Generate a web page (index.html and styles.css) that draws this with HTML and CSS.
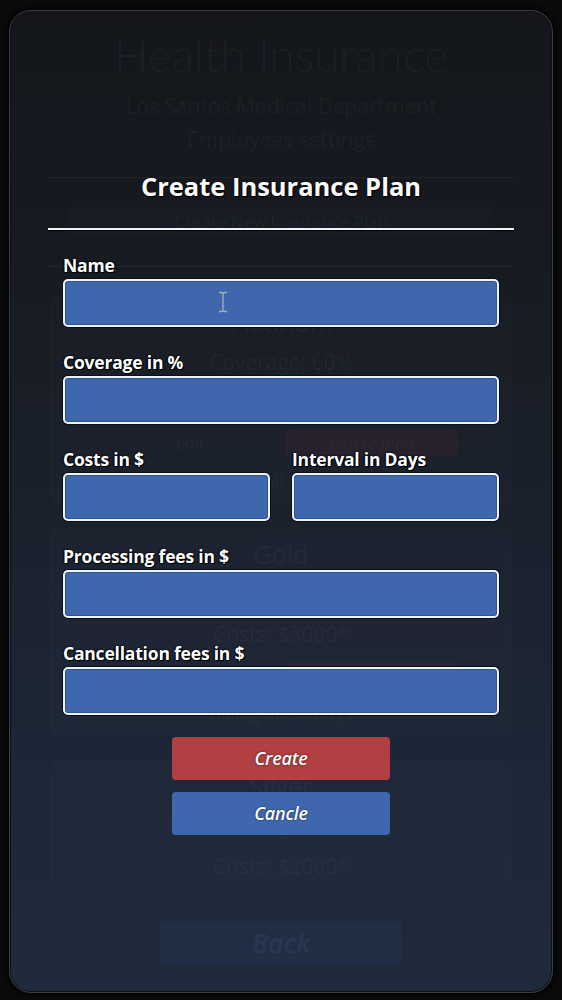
FILE: index.html
```html
<!DOCTYPE html>
<html lang="en">
<head>
<meta charset="utf-8">
<title>Health Insurance</title>
<link rel="stylesheet" href="styles.css">
</head>
<body>
<div class="frame">
  <div class="page">
    <h1 class="page-title">Health Insurance</h1>
    <p class="page-sub">Los Santos Medical Department</p>
    <p class="page-sub">Employees settings</p>
    <div class="page-divider"></div>
    <div class="page-new">Create New Insurance Plan</div>
    <div class="page-divider thin"></div>
    <div class="plans">
      <div class="plan">
        <div class="plan-name">Platinum</div>
        <div class="plan-line">Coverage: 60%</div>
        <div class="plan-line">Costs: $4000*</div>
        <div class="plan-actions"><span class="plan-edit">Edit</span><span class="plan-delete">Delete plan</span></div>
        <div class="plan-line small">Billing all 30 days</div>
      </div>
      <div class="plan">
        <div class="plan-name">Gold</div>
        <div class="plan-line">Coverage: 40%</div>
        <div class="plan-line">Costs: $3000*</div>
        <div class="plan-actions"><span class="plan-edit">Edit</span><span class="plan-delete">Delete plan</span></div>
        <div class="plan-line small">Billing all 30 days</div>
      </div>
      <div class="plan">
        <div class="plan-name">Silver</div>
        <div class="plan-line">Coverage: 20%</div>
        <div class="plan-line">Costs: $2000*</div>
      </div>
    </div>
    <div class="page-back">Back</div>
  </div>

  <div class="modal">
    <h2 class="modal-title">Create Insurance Plan</h2>
    <div class="modal-rule"></div>
    <form class="form">
      <div class="field">
        <label class="label">Name</label>
        <div class="input-wrap">
          <div class="input"></div>
          <svg class="cursor" width="10" height="22" viewBox="0 0 10 22"><path d="M1 1.5h2.5M6.5 1.5H9M5 2v18M1 20.5h2.5M6.5 20.5H9M3.5 1.5Q5 1.5 5 3M6.5 1.5Q5 1.5 5 3M3.5 20.5Q5 20.5 5 19M6.5 20.5Q5 20.5 5 19" fill="none" stroke="#a9b0bd" stroke-width="1.3"/></svg>
        </div>
      </div>
      <div class="field">
        <label class="label">Coverage in %</label>
        <div class="input"></div>
      </div>
      <div class="field-row">
        <div class="field">
          <label class="label">Costs in $</label>
          <div class="input"></div>
        </div>
        <div class="field">
          <label class="label">Interval in Days</label>
          <div class="input"></div>
        </div>
      </div>
      <div class="field">
        <label class="label">Processing fees in $</label>
        <div class="input"></div>
      </div>
      <div class="field">
        <label class="label">Cancellation fees in $</label>
        <div class="input"></div>
      </div>
      <div class="actions">
        <div class="btn btn-create">Create</div>
        <div class="btn btn-cancel">Cancle</div>
      </div>
    </form>
  </div>
</div>
</body>
</html>
```

FILE: styles.css
```css
* { box-sizing: border-box; }

html, body {
  margin: 0;
  padding: 0;
  height: 1000px;
  background: #0b0b0c;
  overflow: hidden;
}

body {
  font-family: "Open Sans", "Liberation Sans", sans-serif;
  color: #fff;
  padding: 10px 9px 7px 9px;
}

.frame {
  position: relative;
  height: 983px;
  border-radius: 22px;
  border: 1px solid #3a3d43;
  background: linear-gradient(180deg, #14161b 0%, #171b22 30%, #1c2433 65%, #1f2a3d 100%);
  box-shadow: 0 0 6px 2px rgba(0,0,0,0.9), inset 0 0 0 1px #101115;
  overflow: hidden;
}

/* ---------- faded background page ---------- */
.page {
  display: flex;
  flex-direction: column;
  align-items: center;
  padding: 17px 38px 0;
  color: rgba(255,255,255,0.045);
}

.page-title {
  margin: 0;
  font-family: Lato, "Open Sans", sans-serif;
  font-weight: 300;
  font-size: 46px;
  line-height: 54px;
}

.page-sub {
  margin: 0;
  font-size: 21px;
  line-height: 33px;
}
.page-title + .page-sub { margin-top: 8px; }

.page-divider {
  align-self: stretch;
  height: 1px;
  background: rgba(255,255,255,0.045);
  margin-top: 21px;
}

.page-new {
  margin-top: 29px;
  width: 426px;
  height: 30px;
  line-height: 30px;
  text-align: center;
  font-size: 17px;
  background: rgba(60,100,170,0.03);
  border-radius: 4px;
}
.page-new + .page-divider { margin-top: 29px; }

.plans {
  align-self: stretch;
  margin-top: 29px;
  padding: 0 2px;
  height: 586px;
  overflow: hidden;
  display: flex;
  flex-direction: column;
  gap: 24px;
}

.plan {
  flex: none;
  height: 208px;
  display: flex;
  flex-direction: column;
  align-items: center;
  padding-top: 5px;
  background: rgba(255,255,255,0.01);
  border: 1px solid rgba(255,255,255,0.015);
  border-radius: 10px;
  font-size: 21px;
}

.plan-name { font-size: 25px; line-height: 40px; font-weight: 400; }
.plan-line { line-height: 40px; }
.plan-line.small { font-size: 18px; }

.plan-actions {
  height: 40px;
  display: flex;
  gap: 35px;
  align-items: center;
  margin-left: 26px;
  font-style: italic;
  font-size: 17px;
}
.plan-edit { width: 120px; text-align: center; }
.plan-delete {
  width: 173px;
  height: 27px;
  line-height: 27px;
  text-align: center;
  background: rgba(180,50,60,0.08);
  border-radius: 4px;
}

.page-back {
  margin-top: 39px;
  width: 242px;
  height: 43px;
  line-height: 43px;
  text-align: center;
  font-size: 27px;
  font-style: italic;
  font-weight: 600;
  color: rgba(120,150,200,0.11);
  background: rgba(60,100,170,0.08);
  border-radius: 3px;
}

/* ---------- modal ---------- */
.modal {
  position: absolute;
  top: 0;
  left: 0;
  right: 0;
  padding: 158px 38px 0;
}

.modal-title {
  margin: 0;
  text-align: center;
  font-size: 25.5px;
  line-height: 34px;
  font-weight: 700;
  color: #fbfbfb;
  text-shadow: 0 0 2px #000, 1px 1px 1px #000;
}

.modal-rule {
  margin-top: 25px;
  height: 2px;
  background: #f2f2f2;
  box-shadow: 0 1px 1px rgba(0,0,0,0.8);
}

.form {
  margin: 24px 15px 0;
  display: flex;
  flex-direction: column;
  gap: 24px;
}

.field {
  display: flex;
  flex-direction: column;
  gap: 3px;
  flex: 1;
}

.field-row {
  display: flex;
  gap: 22px;
}

.label {
  font-size: 17.5px;
  line-height: 22px;
  font-weight: 700;
  letter-spacing: -0.2px;
  color: #fff;
  text-shadow: 0 0 2px #000, 1px 1px 0 #000, -1px 0 1px #000;
}

.input-wrap { position: relative; }

.input {
  height: 48px;
  background: #3e67ad;
  border: 2px solid #eef2fa;
  border-radius: 5px;
  box-shadow: 0 0 0 1px #0a0f1c, inset 0 0 0 1px #2f5496;
}

.cursor {
  position: absolute;
  left: 155px;
  top: 12px;
}

.actions {
  margin-top: -2px;
  display: flex;
  flex-direction: column;
  align-items: center;
  gap: 12px;
}

.btn {
  width: 218px;
  height: 43px;
  line-height: 43px;
  text-align: center;
  font-size: 18px;
  font-style: italic;
  font-weight: 600;
  letter-spacing: -0.2px;
  color: #fff;
  border-radius: 4px;
  text-shadow: 0 0 2px rgba(0,0,0,0.7);
}

.btn-create { background: #b23f41; }
.btn-cancel { background: #3e67ad; }
```
